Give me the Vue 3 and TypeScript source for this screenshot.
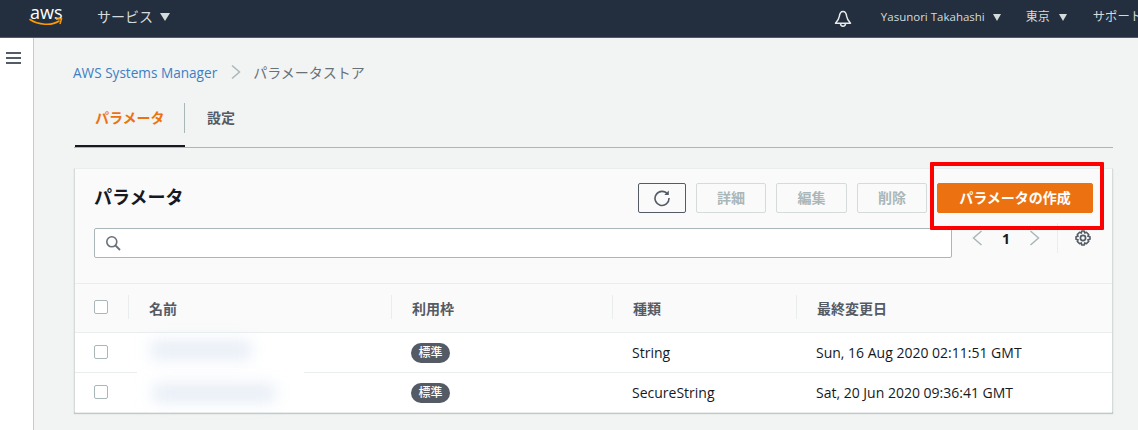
<script setup lang="ts">
interface Row { type: string; date: string; blur: string }
const rows: Row[] = [
  { type: 'String', date: 'Sun, 16 Aug 2020 02:11:51 GMT', blur: 'blur-a' },
  { type: 'SecureString', date: 'Sat, 20 Jun 2020 09:36:41 GMT', blur: 'blur-b' },
]
const heads: string[] = ['名前', '利用枠', '種類', '最終変更日']
</script>

<template>
  <div class="page">
    <header class="topbar">
      <div class="logo">
        <span class="logo-text">aws</span>
        <svg class="smile" width="34" height="10" viewBox="0 0 34 10">
          <path d="M1 2.5C9 8 23 9 30 4" fill="none" stroke="#f90" stroke-width="1.6" stroke-linecap="round" />
          <path d="M27 2.2L32.6 1.6L31 7" fill="none" stroke="#f90" stroke-width="1.5" stroke-linejoin="round" />
        </svg>
      </div>
      <span class="services">サービス</span>
      <i class="caret big"></i>
      <div class="spacer"></div>
      <svg class="bell" width="20" height="20" viewBox="0 0 20 20">
        <path d="M10 2.5C7.500 2.500 6.600 5 6.300 7.500C6 10 4.500 12 2.500 14.200H17.500C15.500 12 14 10 13.700 7.500C13.400 5 12.500 2.500 10 2.500Z" fill="none" stroke="#e8eaea" stroke-width="1.500" stroke-linejoin="round" />
        <path d="M7.500 14.500C7.500 18 12.500 18 12.500 14.500" fill="none" stroke="#e8eaea" stroke-width="1.500" />
      </svg>
      <span class="nav user">Yasunori Takahashi</span>
      <i class="caret"></i>
      <span class="nav region">東京</span>
      <i class="caret"></i>
      <span class="nav support">サポート</span>
    </header>

    <div class="body">
      <aside class="side">
        <div class="burger"><i></i><i></i><i></i></div>
      </aside>

      <main class="main">
        <nav class="crumbs">
          <a class="crumb-link">AWS Systems Manager</a>
          <svg width="12" height="16" viewBox="0 0 12 16"><path d="M2 1.500L9.500 8L2 14.500" fill="none" stroke="#aab7b8" stroke-width="1.500" /></svg>
          <span class="crumb-now">パラメータストア</span>
        </nav>

        <div class="tabs">
          <div class="tab active"><span>パラメータ</span></div>
          <div class="tab"><span>設定</span></div>
        </div>

        <section class="card">
          <div class="card-head">
            <div class="title-row">
              <h2>パラメータ</h2>
              <div class="actions">
                <button class="btn refresh" type="button" aria-label="refresh">
                  <svg width="18" height="18" viewBox="0 0 18 18">
                    <path d="M14.600 5.200A7 7 0 1 0 16 9" fill="none" stroke="#545b64" stroke-width="1.600" />
                    <path d="M15.800 1.500V6H11.300Z" fill="#545b64" />
                  </svg>
                </button>
                <button class="btn off w70" type="button">詳細</button>
                <button class="btn off w71" type="button">編集</button>
                <button class="btn off w70" type="button">削除</button>
                <button class="btn primary" type="button">パラメータの作成</button>
              </div>
            </div>
            <div class="search-row">
              <div class="search">
                <svg width="16" height="16" viewBox="0 0 16 16">
                  <circle cx="6.800" cy="6.800" r="5" fill="none" stroke="#687078" stroke-width="1.600" />
                  <path d="M10.500 10.500L15 15" stroke="#687078" stroke-width="1.800" />
                </svg>
              </div>
              <div class="pager">
                <svg width="12" height="18" viewBox="0 0 12 18"><path d="M10.500 2L2.500 9L10.500 16" fill="none" stroke="#aab7b8" stroke-width="1.500" /></svg>
                <span class="page-no">1</span>
                <svg width="12" height="18" viewBox="0 0 12 18"><path d="M1.500 2L9.500 9L1.500 16" fill="none" stroke="#aab7b8" stroke-width="1.500" /></svg>
              </div>
              <div class="gear-wrap">
                <svg width="16" height="16" viewBox="0 0 16 16">
                  <circle cx="8" cy="8" r="2.600" fill="none" stroke="#545b64" stroke-width="1.700" />
                  <path d="M6.800 1H9.200L9.700 3L11.400 2.300L13.700 4.600L12.900 6.300L15 6.800V9.200L12.900 9.700L13.700 11.400L11.400 13.700L9.700 12.900L9.200 15H6.800L6.300 12.900L4.600 13.700L2.300 11.400L3.100 9.700L1 9.200V6.800L3.100 6.300L2.300 4.600L4.600 2.300L6.300 3.100Z" fill="none" stroke="#545b64" stroke-width="1.600" stroke-linejoin="round" />
                </svg>
              </div>
            </div>
          </div>

          <div class="grid thead">
            <div class="cell check"><i class="box"></i></div>
            <div v-for="h in heads" :key="h" class="cell th">{{ h }}</div>
          </div>
          <div v-for="r in rows" :key="r.type" class="grid row">
            <div class="cell check"><i class="box"></i></div>
            <div class="cell"><span class="blur" :class="r.blur"></span></div>
            <div class="cell"><span class="badge">標準</span></div>
            <div class="cell td">{{ r.type }}</div>
            <div class="cell td">{{ r.date }}</div>
          </div>

          <div class="veil"></div>
          <div class="highlight"></div>
        </section>
      </main>
    </div>
  </div>
</template>

<style>
html, body { margin: 0; background: #f2f3f3; }
</style>

<style scoped>
* { box-sizing: border-box; }
.page {
  width: 1138px;
  height: 430px;
  overflow: hidden;
  display: flex;
  flex-direction: column;
  font-family: "Open Sans", "Noto Sans CJK JP", sans-serif;
  background: #f2f3f3;
}
.topbar {
  height: 38px;
  flex: none;
  display: flex;
  align-items: center;
  background: #232f3e;
  border-bottom: 1px solid #545b64;
  padding: 0 0 3px 29px;
  white-space: nowrap;
  overflow: hidden;
  color: #e8eaea;
}
.logo { position: relative; width: 34px; height: 28px; margin-right: 34px; }
.logo-text {
  position: absolute; left: 1px; top: -3px;
  font: 400 18px/24px "Open Sans", sans-serif;
  color: #fff;
}
.smile { position: absolute; left: 0; top: 14px; }
.services { font-size: 14px; line-height: 20px; margin-right: 7px; color: #d5dbdb; }
.caret {
  display: block; width: 0; height: 0; margin-top: 1px; flex: none;
  border-left: 4.500px solid transparent;
  border-right: 4.500px solid transparent;
  border-top: 7px solid #d5dbdb;
}
.caret.big { border-left-width: 5.500px; border-right-width: 5.500px; border-top-width: 8px; margin-top: 0; }
.spacer { flex: 1; }
.bell { margin: 3px 28px 0 0; flex: none; }
.nav { font-size: 12px; line-height: 18px; color: #d5dbdb; margin-right: 9px; }
.user { font-size: 11.500px; margin-right: 8px; }
.region { margin-left: 25px; }
.support { font-size: 12.300px; margin-left: 26px; margin-right: -4px; }
.body { flex: 1; display: flex; min-height: 0; }
.side { width: 34px; flex: none; background: #fff; border-right: 1px solid #c6cccc; padding: 14px 0 0 6px; }
.burger { display: flex; flex-direction: column; gap: 3px; width: 15px; }
.burger i { display: block; height: 2px; background: #545b64; }
.main { flex: 1; min-width: 0; padding: 0 25px 0 40px; }
.crumbs { height: 20px; margin: 24px 0 0 -1px; display: flex; align-items: center; }
.crumb-link { color: #3c7fc4; font-size: 13.600px; }
.crumbs svg { margin: 0 11px 0 13px; }
.crumb-now { color: #687078; font-size: 14px; }
.tabs {
  margin-top: 18px; height: 48px;
  display: flex; align-items: flex-start;
  border-bottom: 1px solid #aab7b8;
}
.tab { height: 47px; padding-top: 3px; font-size: 14px; font-weight: 700; color: #545b64; white-space: nowrap; }
.tab span { display: block; padding: 0 22px; height: 30px; line-height: 30px; }
.tab.active { width: 110px; color: #ec7211; border-bottom: 2px solid #16191f; margin-left: 1px; }
.tab.active span { padding: 0 0 0 20px; border-right: 1px solid #aab7b8; }
.card {
  position: relative;
  width: 1039px;
  height: 245px;
  margin-top: 20px;
  background: #fff;
  border-top: 1px solid #eaeded;
  border-left: 1px solid #d5dbdb;
  border-right: 1px solid #d5dbdb;
  border-bottom: 1px solid #aab7b8;
  box-shadow: 0 1px 1px rgba(0, 28, 36, 0.2);
}
.card-head {
  height: 115px;
  background: #fafafa;
  padding: 14px 19px 0 19px;
  border-bottom: 1px solid #eaeded;
}
.title-row { display: flex; justify-content: space-between; align-items: center; height: 30px; }
h2 { margin: 0; font-size: 18px; line-height: 28px; padding-bottom: 2px; font-weight: 700; color: #16191f; }
.actions { display: flex; gap: 10px; }
.btn {
  height: 30px; border-radius: 2px; padding: 0;
  font: 700 14px/28px "Open Sans", "Noto Sans CJK JP", sans-serif;
  background: #fafafa;
}
.refresh { width: 48px; border: 1px solid #545b64; display: flex; align-items: center; justify-content: center; }
.off { border: 1px solid #d5dbdb; color: #aab7b8; }
.w70 { width: 70px; }
.w71 { width: 71px; }
.primary { width: 156px; border: 1px solid #ec7211; background: #ec7211; color: #fff; }
.search-row { display: flex; align-items: center; margin-top: 15px; height: 30px; }
.search {
  width: 858px; height: 30px; background: #fff;
  border: 1px solid #aab7b8; border-radius: 2px;
  display: flex; align-items: center; padding-left: 10px;
}
.pager { width: 106px; display: flex; align-items: center; padding-left: 19px; margin-top: -10px; height: 30px; border-right: 1px solid #eaeded; }
.page-no { width: 46px; text-align: center; font-size: 14px; font-weight: 700; color: #16191f; }
.gear-wrap { flex: 1; padding-left: 17px; margin-top: -10px; height: 16px; display: flex; }
.grid { display: grid; grid-template-columns: 54px 263px 221px 184px 1fr; }
.thead { height: 49px; background: #fafafa; border-bottom: 1px solid #eaeded; }
.row { height: 40px; border-bottom: 1px solid #eaeded; }
.row:last-of-type { height: 39px; border-bottom: 0; }
.cell { display: flex; align-items: center; padding-left: 20px; min-width: 0; position: relative; }
.check { padding-left: 19px; padding-bottom: 1px; }
.thead .check { padding-bottom: 2px; }
.thead .cell::after {
  content: ""; position: absolute; right: 0; top: 11px; height: 24px; width: 1px; background: #eaeded;
}
.thead .cell:last-child::after { display: none; }
.th { font-size: 14px; font-weight: 700; color: #545b64; padding-bottom: 1px; }
.td { font-size: 14px; color: #16191f; padding-left: 19px; }
.box { display: block; width: 14px; height: 14px; background: #fff; border: 1px solid #aab7b8; border-radius: 2px; }
.badge {
  height: 20px; padding: 0 7.500px; border-radius: 10px; margin-left: -1px;
  background: #545b64; color: #fff; font-size: 12px; line-height: 20px; font-weight: 500;
}
.blur { display: block; height: 18px; background: #e6edf6; filter: blur(8px); position: relative; z-index: 2; }
.blur-a { width: 100px; margin-top: -6px; margin-left: 2px; }
.blur-b { width: 122px; margin-top: 0; margin-left: 4px; }
.veil { position: absolute; left: 62px; top: 203px; width: 167px; height: 40px; background: #fff; z-index: 1; }
.highlight {
  position: absolute; left: 855px; top: -7px; width: 174px; height: 68px;
  border: 4px solid #f00; border-radius: 1px; pointer-events: none; z-index: 3;
}
</style>
